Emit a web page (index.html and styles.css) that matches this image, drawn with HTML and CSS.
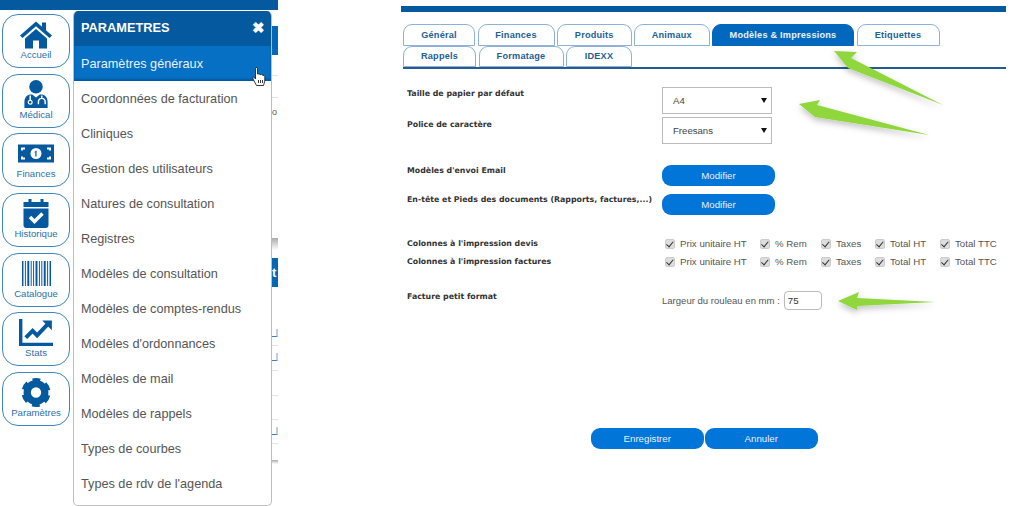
FILE: index.html
```html
<!DOCTYPE html>
<html lang="fr">
<head>
<meta charset="utf-8">
<title>Paramètres</title>
<link rel="stylesheet" href="styles.css">
</head>
<body>
<div class="page">
  <section class="left">
    <div class="topbar"></div>
    <div class="left-body">
      <nav class="nav">
        <a class="nav-btn">
          <svg class="ico" viewBox="0 0 34 28"><path d="M17 1 L1 15 L3.500 17.500 L17 5.800 L30.500 17.500 L33 15 L27 9.700 V2 H23 V6.200 Z"/><path d="M17 8.500 L6 18 V28 H14 V20 H20 V28 H28 V18 Z"/></svg>
          <span>Accueil</span>
        </a>
        <a class="nav-btn">
          <svg class="ico" viewBox="0 0 28 30"><circle cx="14" cy="7" r="7"/><path d="M5 16 Q7 14.500 10 15 L14 18 L18 15 Q21 14.500 23 16 Q26 18 26 23 V29 H2 V23 Q2 18 5 16Z"/><path class="white-line" d="M8 16 V21 M20 16 V19 Q23.500 19 23.500 23 V25 M16.500 25 V23 Q16.500 19 20 19"/><circle class="white-dot" cx="8" cy="23" r="2"/></svg>
          <span>Médical</span>
        </a>
        <a class="nav-btn">
          <svg class="ico money" viewBox="0 0 36 18"><path fill-rule="evenodd" d="M0 0 H36 V18 H0 Z M3 3 V6 H5 V5 H7 V3 Z M29 3 V5 H31 V6 H33 V3 Z M3 12 V15 H7 V13 H5 V12 Z M31 12 V13 H29 V15 H33 V12 Z"/><circle class="white-fill" cx="18" cy="9" r="5.500"/><path d="M16.600 7.300 L18.500 6 V12 H17.300 V7.800 L16.600 8.200Z"/></svg>
          <span>Finances</span>
        </a>
        <a class="nav-btn">
          <svg class="ico" viewBox="0 0 25 29"><path d="M5 0 H8 V3 H17 V0 H20 V3 H25 V8 H0 V3 H5Z"/><path d="M0 9.500 H25 V26 Q25 29 22 29 H3 Q0 29 0 26Z"/><path class="white-line thick" d="M6.500 18 L11 22.500 L19 14.500"/></svg>
          <span>Historique</span>
        </a>
        <a class="nav-btn">
          <svg class="ico barcode" viewBox="0 0 30 30" preserveAspectRatio="none"><path d="M0 0h1.500v30H0zM3 0h1v30H3zM5.500 0h2v30h-2zM9 0h1v30H9zM11.500 0h1v30h-1zM14 0h2v30h-2zM17.500 0h1v30h-1zM20 0h1v30h-1zM22.500 0h2v30h-2zM26 0h1v30h-1zM28.500 0h1.500v30h-1.500z"/></svg>
          <span>Catalogue</span>
        </a>
        <a class="nav-btn">
          <svg class="ico" viewBox="0 0 30 24"><path d="M0 0 H3 V21 H30 V24 H0Z"/><path class="blue-line" d="M6 16.500 L12 10.500 L16 14.500 L25 5"/><path d="M20.500 1.500 H29 V10 Z"/></svg>
          <span>Stats</span>
        </a>
        <a class="nav-btn">
          <svg class="ico" viewBox="0 0 28 28"><circle class="teeth" cx="14" cy="14" r="12.500"/><circle class="gear-ring" cx="14" cy="14" r="8.500"/></svg>
          <span>Paramètres</span>
        </a>
      </nav>
      <div class="behind">
        <div class="sl sl-blue"></div>
        <div class="sl sl-rule r1"></div>
        <div class="sl sl-rule r2"></div>
        <div class="sl sl-char">o</div>
        <div class="sl sl-shade"></div>
        <div class="sl sl-blue two">t</div>
        <div class="sl sl-tick t1"></div>
        <div class="sl sl-rule r3"></div>
        <div class="sl sl-tick t2"></div>
        <div class="sl sl-rule r4"></div>
        <div class="sl sl-rule r5"></div>
        <div class="sl sl-rule r6"></div>
        <div class="sl sl-tick t3"></div>
        <div class="sl sl-rule r7"></div>
        <div class="sl sl-shade s2"></div>
      </div>
    </div>
    <aside class="menu">
      <header class="menu-head"><span>PARAMETRES</span><span class="close">✖</span></header>
      <ul class="menu-list">
        <li class="active">Paramètres généraux</li>
        <li>Coordonnées de facturation</li>
        <li>Cliniques</li>
        <li>Gestion des utilisateurs</li>
        <li>Natures de consultation</li>
        <li>Registres</li>
        <li>Modèles de consultation</li>
        <li>Modèles de comptes-rendus</li>
        <li>Modèles d'ordonnances</li>
        <li>Modèles de mail</li>
        <li>Modèles de rappels</li>
        <li>Types de courbes</li>
        <li>Types de rdv de l'agenda</li>
      </ul>
    </aside>
    <svg class="cursor" viewBox="0 0 14 20"><path d="M3.500 1.500 Q3.500 .5 4.500 .5 Q5.500 .5 5.500 1.500 V7 Q7.500 6.500 8 7.500 Q10 7 10.500 8.200 Q12.500 8 12.800 9.500 V14 L11.500 18.500 H4.500 L1 12 Q.5 10.500 1.500 10.200 Q2.500 10 3.500 12Z"/><path d="M6.500 13V16M8.500 13V16M10.500 13V16"/></svg>
  </section>

  <main class="right">
    <div class="rbar"></div>
    <div class="tabs">
      <div class="tab-row">
        <a class="tab w1">Général</a>
        <a class="tab w2">Finances</a>
        <a class="tab w3">Produits</a>
        <a class="tab w4">Animaux</a>
        <a class="tab w5 on">Modèles &amp; Impressions</a>
        <a class="tab w6">Etiquettes</a>
      </div>
      <div class="tab-row low">
        <a class="tab w7">Rappels</a>
        <a class="tab w8">Formatage</a>
        <a class="tab w9">IDEXX</a>
      </div>
    </div>
    <form class="form">
      <div class="row r-sel">
        <label>Taille de papier par défaut</label>
        <div class="sel"><select><option>A4</option></select></div>
      </div>
      <div class="row r-sel2">
        <label>Police de caractère</label>
        <div class="sel"><select><option>Freesans</option></select></div>
      </div>
      <div class="row r-btn">
        <label>Modèles d'envoi Email</label>
        <button type="button" class="btn mod">Modifier</button>
      </div>
      <div class="row r-btn2">
        <label>En-tête et Pieds des documents (Rapports, factures,...)</label>
        <button type="button" class="btn mod">Modifier</button>
      </div>
      <div class="row r-chk">
        <label>Colonnes à l'impression devis</label>
        <div class="checks">
          <span class="ck c1"><i></i>Prix unitaire HT</span>
          <span class="ck c2"><i></i>% Rem</span>
          <span class="ck c3"><i></i>Taxes</span>
          <span class="ck c4"><i></i>Total HT</span>
          <span class="ck c5"><i></i>Total TTC</span>
        </div>
      </div>
      <div class="row r-chk2">
        <label>Colonnes à l'impression factures</label>
        <div class="checks">
          <span class="ck c1"><i></i>Prix unitaire HT</span>
          <span class="ck c2"><i></i>% Rem</span>
          <span class="ck c3"><i></i>Taxes</span>
          <span class="ck c4"><i></i>Total HT</span>
          <span class="ck c5"><i></i>Total TTC</span>
        </div>
      </div>
      <div class="row r-roll">
        <label>Facture petit format</label>
        <div class="roll"><span>Largeur du rouleau en mm :</span><input type="text" value="75"></div>
      </div>
      <div class="actions">
        <button type="button" class="btn act">Enregistrer</button>
        <button type="button" class="btn act">Annuler</button>
      </div>
    </form>
  </main>

  <svg class="arrows" viewBox="0 0 1024 506">
    <defs><filter id="sh" x="-20%" y="-40%" width="140%" height="180%"><feDropShadow dx="0" dy="3" stdDeviation="3" flood-color="#000" flood-opacity=".25"/></filter></defs>
    <g filter="url(#sh)">
      <polygon points="834,51 857,52 851,58 943,105 848,68"/>
      <polygon points="799,104 820,100 817,105 929,135 815,117"/>
      <polygon points="838,301 859,292 857,298 935,302 857,306 857,310"/>
    </g>
  </svg>
</div>
</body>
</html>
```
FILE: styles.css
```css
* { box-sizing: border-box; }
html, body { margin: 0; padding: 0; background: #fff; }
body { font-family: "Liberation Sans", Arial, sans-serif; }
.page { position: relative; width: 1024px; height: 506px; overflow: hidden; display: flex; align-items: flex-start; }

/* left panel */
.left { position: relative; width: 278px; height: 506px; flex: none; }
.topbar { height: 10px; background: #04599f; }
.left-body { display: flex; justify-content: space-between; }
.nav { display: flex; flex-direction: column; gap: 5.700px; padding: 4px 0 0 2px; }
.nav-btn { width: 68px; height: 54px; border: 1.500px solid #3f86bf; border-radius: 16px; display: flex; flex-direction: column; align-items: center; justify-content: flex-end; padding-bottom: 7px; color: #2c71ab; font-size: 9.600px; line-height: 11px; background: #fff; }
.ico { display: block; fill: #04599f; width: 34px; height: 29px; }
.money { width: 36px; }
.white-line { fill: none; stroke: #fff; stroke-width: 1.500; }
.white-line.thick { stroke-width: 3.500; }
.white-dot { fill: none; stroke: #fff; stroke-width: 1.200; }
.white-fill { fill: #fff; }
.barcode { width: 29px; height: 25px; margin: 2px 0; }
.blue-line { fill: none; stroke: #04599f; stroke-width: 3.500; }
.teeth { fill: none; stroke: #04599f; stroke-width: 3; stroke-dasharray: 7.500 5.590; stroke-dashoffset: -2.795; }
.gear-ring { fill: none; stroke: #04599f; stroke-width: 7; }

.behind { width: 6px; display: flex; flex-direction: column; }
.sl { height: 1px; flex: none; }
.sl-blue { height: 29px; background: #0667b5; margin-top: 16px; }
.sl-blue.two { margin-top: 8px; color: #fff; font-size: 13px; font-weight: 700; line-height: 29px; }
.sl-rule { background: #e4e4e4; }
.sl-rule.r1 { margin-top: 20px; }
.sl-rule.r2 { margin-top: 21px; }
.sl-char { height: 8px; margin-top: 10px; font-size: 9px; line-height: 8px; color: #555; }
.sl-shade { height: 12px; margin-top: 122px; background: linear-gradient(#aaa, #fff); }
.sl-shade.s2 { height: 4px; margin-top: 16px; }
.sl-tick { height: 8px; width: 6px; border-bottom: 1px solid #3d80bf; border-right: 2px solid #c5c8e8; }
.sl-tick.t1 { margin-top: 42px; }
.sl-rule.r3 { margin-top: 8px; }
.sl-tick.t2 { margin-top: 7px; }
.sl-rule.r4 { margin-top: 9px; }
.sl-rule.r5 { margin-top: 24px; }
.sl-rule.r6 { margin-top: 23px; }
.sl-tick.t3 { margin-top: 7px; }
.sl-rule.r7 { margin-top: 8px; }

.menu { position: absolute; left: 73px; top: 11px; width: 199px; height: 495px; border: 1px solid #bdbdbd; border-top: 0; border-radius: 5px; background: #fff; overflow: hidden; }
.menu-head { height: 35px; background: #04599f; color: #fff; display: flex; justify-content: space-between; align-items: center; padding: 0 6px 2px 7px; font-size: 12.800px; font-weight: 700; }
.close { font-size: 15px; }
.menu-list { list-style: none; margin: 0; padding: 0; }
.menu-list li { height: 35px; line-height: 36px; padding-left: 7px; font-size: 12.700px; color: #555; white-space: nowrap; }
.menu-list li.active { background: #0670c4; color: #e8f2fb; box-shadow: inset 0 -2px 2px #04599f; }
.cursor { position: absolute; left: 252px; top: 67px; width: 14px; height: 20px; fill: #fff; stroke: #222; stroke-width: .9; }

/* right panel */
.right { width: 605px; margin-left: 123px; flex: none; padding-top: 6px; }
.rbar { height: 6px; background: #04599f; }
.tabs { margin: 12px 0 0 2px; border-bottom: 2px solid #235b93; height: 45px; }
.tab-row { display: flex; height: 21.500px; }
.tab { display: block; height: 100%; text-align: center; margin-right: 2.500px; border: 1px solid #8db2d6; border-radius: 9px 9px 0 0; font-size: 9.200px; font-weight: 700; line-height: 20px; color: #245f94; letter-spacing: .2px; background: #fff; }
.low .tab { line-height: 19px; }
.tab.on { background: #0268bd; border-color: #0268bd; color: #e8f2fb; }
.w1 { width: 72px; } .w2 { width: 77px; } .w3 { width: 74.500px; } .w4 { width: 75.500px; } .w5 { width: 142px; } .w6 { width: 83px; }
.w7 { width: 73px; } .w8 { width: 85px; } .w9 { width: 66px; }

.row { display: flex; align-items: flex-start; padding-left: 6px; }
.row label { width: 255px; flex: none; font-family: "DejaVu Sans", Verdana, sans-serif; font-size: 7.850px; font-weight: 700; color: #333; line-height: 10px; white-space: nowrap; }
.r-sel { margin-top: 18px; height: 27px; }
.r-sel label { padding-top: 2px; }
.r-sel2 { margin-top: 3px; height: 27px; }
.r-sel2 label { padding-top: 3px; }
.r-btn { margin-top: 21px; height: 21px; }
.r-btn label { padding-top: 1px; }
.r-btn2 { margin-top: 8px; height: 21px; }
.r-btn2 label { padding-top: 1px; }
.r-chk { margin-top: 20px; height: 18px; align-items: center; }
.r-chk2 { height: 18px; align-items: center; }
.r-roll { margin-top: 20px; height: 19px; }
.r-roll label { padding-top: 1px; }

.sel { position: relative; width: 110px; height: 27px; }
.sel select { appearance: none; -webkit-appearance: none; width: 100%; height: 100%; border: 1px solid #bbb; border-radius: 0; background: #fff; font: 9.600px "Liberation Sans", Arial, sans-serif; color: #444; padding: 0 10px 1px; }
.sel::after { content: ""; position: absolute; right: 5px; top: 11px; border-left: 3px solid transparent; border-right: 3px solid transparent; border-top: 5px solid #111; }

.btn { border: 0; background: #0275d8; color: #e8f2fb; font: 9.700px "Liberation Sans", Arial, sans-serif; border-radius: 9px; height: 21px; padding: 0; }
.mod { width: 113px; }

.checks { display: flex; height: 14px; font-size: 9.700px; color: #555; line-height: 14px; }
.ck { display: flex; align-items: center; gap: 5px; white-space: nowrap; }
.ck i { width: 10px; height: 10px; background: #ddd; border: 1px solid #ccc; border-radius: 2px; position: relative; flex: none; }
.ck i::after { content: ""; position: absolute; left: 2px; top: 0; width: 3px; height: 5.500px; border: solid #333; border-width: 0 1.500px 1.500px 0; transform: rotate(40deg); }
.c1 { width: 95px; margin-left: 3px; } .c2 { width: 61px; } .c3 { width: 54px; } .c4 { width: 65px; }

.roll { display: flex; align-items: center; gap: 4px; font-size: 9.550px; color: #555; }
.roll input { width: 38px; height: 19px; border: 1px solid #bbb; border-radius: 4px; padding: 0 3px; font: 9.700px "Liberation Sans", Arial, sans-serif; color: #333; }

.actions { display: flex; gap: 1.500px; margin: 118px 0 0 190px; }
.act { width: 112.500px; }

.arrows { position: absolute; left: 0; top: 0; width: 1024px; height: 506px; pointer-events: none; fill: #90d63e; }
```
